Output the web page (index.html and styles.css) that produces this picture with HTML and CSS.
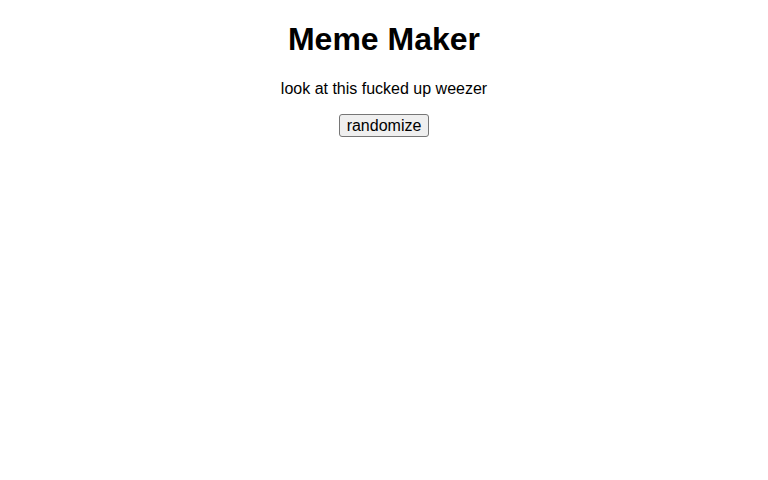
FILE: index.html
```html
<!DOCTYPE html>
<html lang="en">
<head>
    <meta charset="UTF-8">
    <meta name="viewport" content="width=device-width, initial-scale=1.0">
    <title>Meme Maker</title>
    <link rel="stylesheet" href="styles.css">
</head>
<body>

<div class="container">
    <h1>Meme Maker</h1>
    <p id="caption">look at this fucked up weezer</p>
    <button id="randomize">randomize</button>
</div>

</body>
</html>
```

FILE: styles.css
```css
body {
    font-family: "Liberation Sans", Arial, sans-serif;
    margin: 0 8px;
    color: #000;
    background: #fff;
}
.container {
    text-align: center;
    padding-top: 21px;
}
h1 {
    font-size: 32px;
    margin: 0 0 22px;
}
p {
    font-size: 16px;
    margin: 16px 0;
}
button {
    font-family: "Liberation Sans", Arial, sans-serif;
    font-size: 16px;
    line-height: 19px;
    color: #000;
    background-color: #efefef;
    border: 1px solid #767676;
    border-radius: 3px;
    padding: 1px 7px;
    cursor: pointer;
}
button:hover {
    background-color: #e5e5e5;
}
```
